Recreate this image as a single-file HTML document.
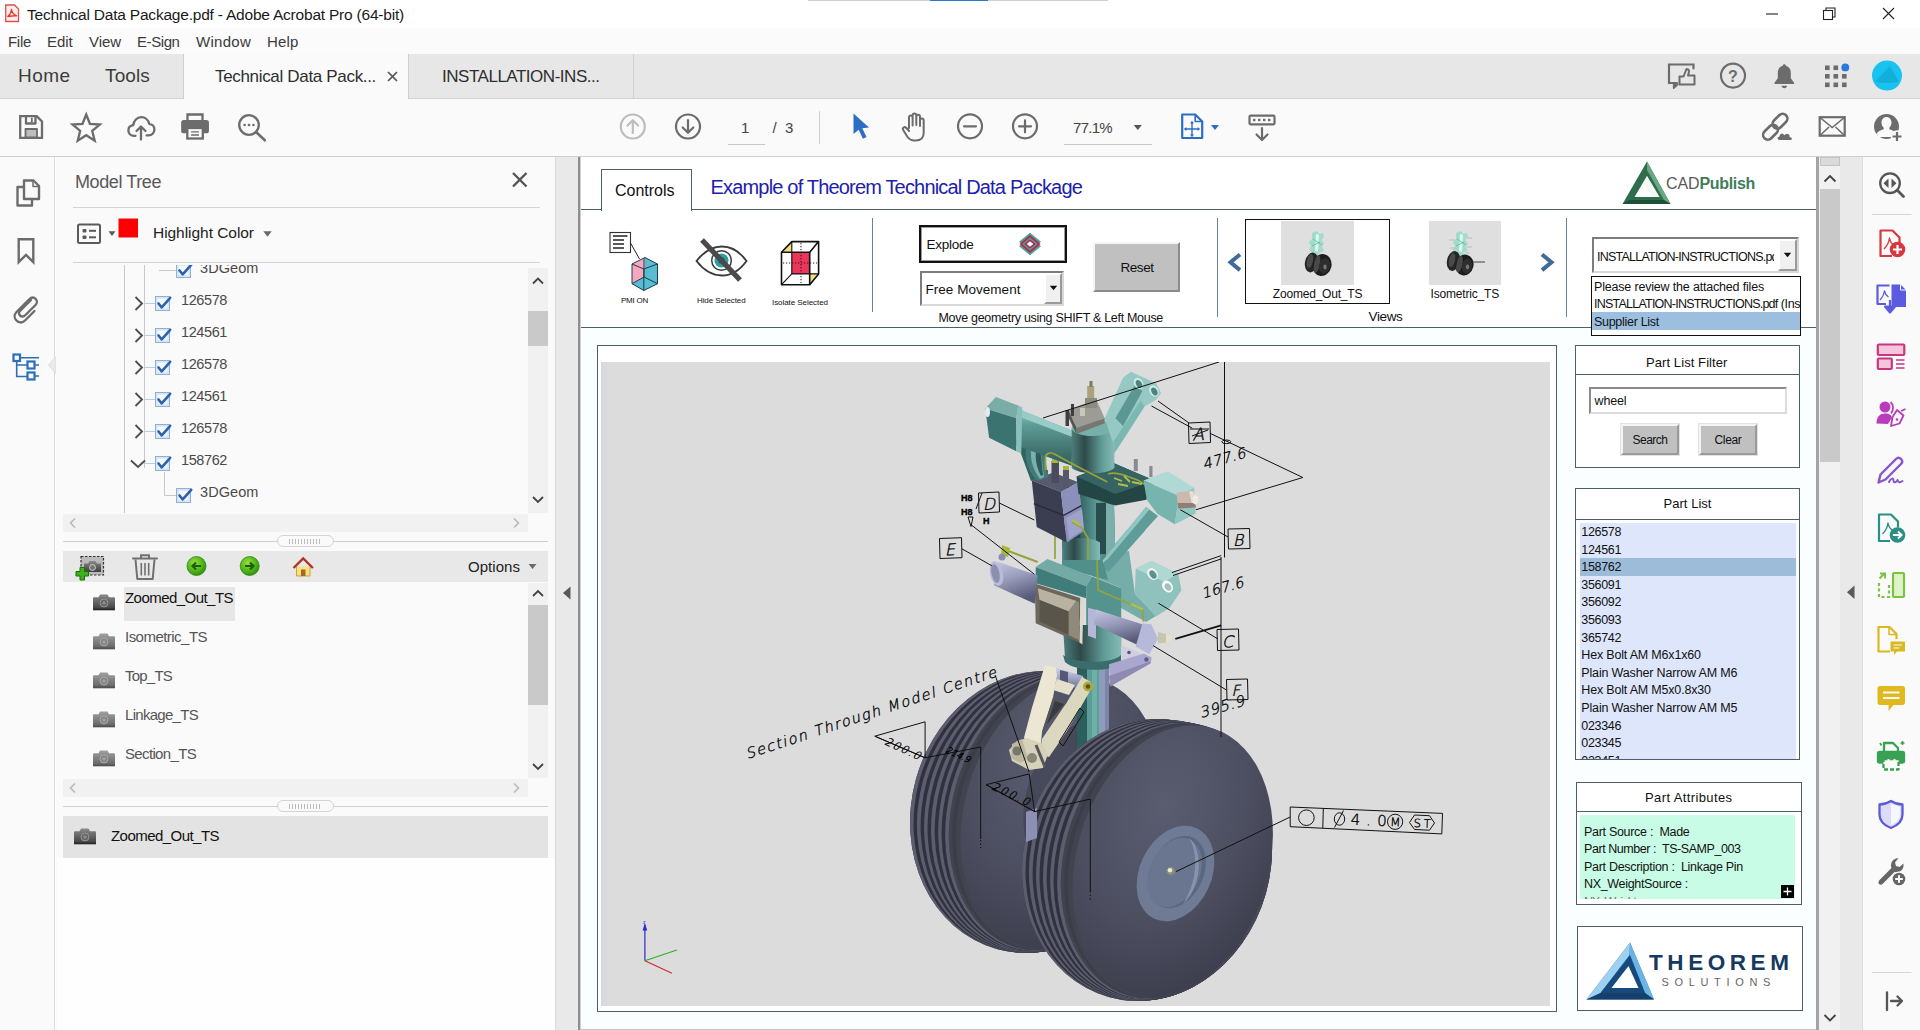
<!DOCTYPE html>
<html lang="en">
<head>
<meta charset="utf-8">
<title>Technical Data Package.pdf - Adobe Acrobat Pro (64-bit)</title>
<style>
*{box-sizing:border-box;margin:0;padding:0}
html,body{width:1920px;height:1030px;overflow:hidden;background:#fff}
body{font-family:"Liberation Sans","DejaVu Sans",sans-serif;color:#222;position:relative}
.abs{position:absolute}
.t{position:absolute;white-space:nowrap;line-height:1}
svg{position:absolute;overflow:visible}
/* ---- chrome ---- */
#titlebar{left:0;top:0;width:1920px;height:28px;background:#fff}
#menubar{left:0;top:28px;width:1920px;height:26px;background:#fbfbfb}
#tabbar{left:0;top:54px;width:1920px;height:45px;background:#e7e7e7;border-bottom:1px solid #d2d2d2}
#toolbar{left:0;top:99px;width:1920px;height:58px;background:#fafafa;border-bottom:1px solid #cfcfcf}
#leftstrip{left:0;top:157px;width:55px;height:873px;background:#fafafa;border-right:1px solid #dcdcdc}
#panel{left:56px;top:157px;width:500px;height:873px;background:#fafafa;border-right:1px solid #d8d8d8}
#gutterL{left:556px;top:157px;width:22px;height:873px;background:#e9e9e9}
#docborderL{left:578px;top:157px;width:3px;height:873px;background:linear-gradient(90deg,#8e8e8e 0,#8e8e8e 66%,#cfcfcf 66%)}
#doc{left:581px;top:157px;width:1235px;height:873px;background:#fff}
#vscroll{left:1816px;top:157px;width:24px;height:873px;background:#f1f1f1;border-left:3px solid #a4a4a4}
#gutterR{left:1840px;top:157px;width:22px;height:873px;background:#e9e9e9}
#rightstrip{left:1862px;top:157px;width:58px;height:873px;background:#fafafa;border-left:1px solid #dcdcdc}
.menu{font-size:15px;color:#3a3a3a;top:34px}
.calib{font-family:"Liberation Sans","DejaVu Sans",sans-serif}
</style>
</head>
<body>
<!-- ================= TITLE BAR ================= -->
<div id="titlebar" class="abs"></div>
<svg style="left:4px;top:4px" width="16" height="19" viewBox="0 0 16 19"><path d="M1.700 1h8.800l4 4v12.500h-12.800z" fill="#fdecec" stroke="#d9534f" stroke-width="1.300"/><path d="M3.800 12.500c2.200-1.800 3.600-4.300 3.800-7 .4 2.800 2.200 5.200 5 6.300-3-.1-6 .2-8.800.7z" fill="none" stroke="#e03a32" stroke-width="1.400" stroke-linejoin="round"/></svg>
<div  class="t" style="letter-spacing:-0.211px;left:27px;top:6.500px;font-size:15.500px;color:#1a1a1a">Technical Data Package.pdf - Adobe Acrobat Pro (64-bit)</div>
<svg style="left:1764px;top:6px" width="140" height="16" viewBox="0 0 140 16"><g stroke="#222" stroke-width="1.1" fill="none"><path d="M2 8h12"/><rect x="59.500" y="4.500" width="9" height="9"/><path d="M62 4.500v-2.500h9v9h-2.500"/><path d="M119 2l11 11M130 2l-11 11"/></g></svg>
<div class="abs" style="left:808px;top:0;width:300px;height:1px;background:#d0d0d0"></div>
<div class="abs" style="left:930px;top:0;width:58px;height:1px;background:#2a7ad0"></div>

<!-- ================= MENU BAR ================= -->
<div id="menubar" class="abs"></div>
<div  class="t menu" style="letter-spacing:-0.293px;left:8px">File</div>
<div  class="t menu" style="letter-spacing:-0.090px;left:47px">Edit</div>
<div  class="t menu" style="letter-spacing:-0.062px;left:89px">View</div>
<div  class="t menu" style="letter-spacing:-0.422px;left:137px">E-Sign</div>
<div  class="t menu" style="letter-spacing:0.273px;left:196px">Window</div>
<div  class="t menu" style="letter-spacing:0.160px;left:267px">Help</div>

<!-- ================= TAB BAR ================= -->
<div id="tabbar" class="abs"></div>
<div  class="t" style="letter-spacing:0.453px;left:18px;top:66px;font-size:19px;color:#3c3c3c">Home</div>
<div  class="t" style="letter-spacing:0.128px;left:105px;top:66px;font-size:19px;color:#3c3c3c">Tools</div>
<div class="abs" style="left:183px;top:54px;width:226px;height:46px;background:#fafafa;border-left:1px solid #d0d0d0;border-right:1px solid #d0d0d0"></div>
<div  class="t" style="letter-spacing:-0.327px;left:215px;top:68px;font-size:17px;color:#2e2e2e">Technical Data Pack...</div>
<svg style="left:387px;top:71px" width="11" height="11" viewBox="0 0 11 11"><path d="M1 1l9 9M10 1l-9 9" stroke="#555" stroke-width="1.700" fill="none"/></svg>
<div class="abs" style="left:633px;top:54px;width:1px;height:44px;background:#d0d0d0"></div>
<div  class="t" style="letter-spacing:-0.478px;left:442px;top:68px;font-size:17px;color:#2e2e2e">INSTALLATION-INS...</div>

<!-- ================= TOOLBAR ================= -->
<div id="toolbar" class="abs"></div>

<svg style="left:0;top:98px" width="1920" height="58" viewBox="0 98 1920 58">
<g fill="none" stroke="#6c6c6c" stroke-width="2.300" stroke-linejoin="round" stroke-linecap="round">
<!-- save -->
<path d="M20.200 116.200h16.500l5.300 5.300v16.300h-21.800z" stroke-linejoin="miter"/>
<path d="M26 116.500v7h9.500v-7"/><path d="M31.800 118.500v3" stroke-width="1.800"/>
<rect x="25.500" y="129" width="11.500" height="8.500" fill="#bdbdbd" stroke-width="1.800"/>
<!-- star -->
<path d="M86.200 114.500l3.700 9.300 10 .7-7.700 6.400 2.500 9.700-8.500-5.400-8.500 5.400 2.500-9.700-7.700-6.400 10-.7z" stroke-linejoin="miter"/>
<!-- cloud up -->
<path d="M135.500 135.800h-1.500c-3.300 0-5.600-2.300-5.600-5.300 0-2.800 2-5 4.800-5.300.6-4.500 3.800-8 8-8 4 0 7.200 2.800 8 6.600 3 .3 5.200 2.600 5.200 5.800 0 3.300-2.600 5.800-5.800 5.800h-2"/>
<path d="M141 139.500v-12.500M136.500 131l4.500-4.500 4.500 4.500"/>
<!-- printer -->
<path d="M187.500 121v-6.500h15v6.500" stroke-linejoin="miter"/>
<rect x="182.300" y="121.200" width="25.500" height="11" rx="1.500" fill="#6c6c6c"/>
<rect x="187.300" y="128" width="15.500" height="10.500" fill="#fafafa" stroke-linejoin="miter"/>
<path d="M191.500 131.800h7M191.500 135h7" stroke-width="1.300"/>
<!-- search -->
<circle cx="249" cy="125" r="9.800"/><path d="M256.300 132.300l8.500 8" stroke-width="2.600"/>
</g>
<g fill="#6c6c6c"><circle cx="244.600" cy="125" r="1.300"/><circle cx="249" cy="125" r="1.300"/><circle cx="253.400" cy="125" r="1.300"/></g>
<!-- page up (disabled) -->
<g fill="none" stroke="#bdbdbd" stroke-width="2.200" stroke-linecap="round" stroke-linejoin="round"><circle cx="632.800" cy="126.500" r="12"/><path d="M632.800 133v-12.500M627.500 125.500l5.300-5.300 5.300 5.300"/></g>
<!-- page down -->
<g fill="none" stroke="#6c6c6c" stroke-width="2.200" stroke-linecap="round" stroke-linejoin="round"><circle cx="688" cy="126.500" r="12"/><path d="M688 120v12.500M682.700 127.500l5.300 5.300 5.300-5.300"/></g>
<path d="M728 144.500h37" stroke="#c9c9c9" stroke-width="1"/>
<path d="M819.500 111v33" stroke="#d0d0d0" stroke-width="1"/>
<!-- select arrow -->
<path d="M853.500 113.500v20.500l5.200-4.300 4.200 9 3.600-1.700-4.200-8.800 6.700-.6z" fill="#2a6fc4"/>
<!-- hand -->
<g fill="none" stroke="#6c6c6c" stroke-width="2" stroke-linecap="round" stroke-linejoin="round">
<path d="M909 128v-10.500c0-2.600 3.600-2.600 3.600 0v8M912.600 125v-9.500c0-2.600 3.700-2.600 3.700 0v9.500M916.300 125v-8.200c0-2.600 3.700-2.600 3.700 0v9M920 126v-5.500c0-2.600 3.700-2.600 3.700 0v12c0 5-3 8-8 8h-1.500c-3.500 0-5.200-1.500-7-4l-4-6.500c-1.200-2 1.300-3.800 2.900-2.200l3 3.200"/>
</g>
<!-- zoom out / in -->
<g fill="none" stroke="#6c6c6c" stroke-width="2.200" stroke-linecap="round"><circle cx="970" cy="126.300" r="12"/><path d="M964 126.300h12"/><circle cx="1025" cy="126.300" r="12"/><path d="M1019 126.300h12M1025 120.300v12"/></g>
<path d="M1064 144.500h88" stroke="#c9c9c9" stroke-width="1"/>
<path d="M1133.800 125h8l-4 5z" fill="#555"/>
<!-- fit page -->
<g fill="none" stroke="#2a6fc4" stroke-width="2.200" stroke-linejoin="round"><path d="M1182.200 114.500h13l7 7v16.500h-20z"/><path d="M1195.200 114.500v7h7" stroke-width="1.600"/></g>
<g stroke="#2a6fc4" stroke-width="1.400" fill="#2a6fc4"><path d="M1192 122.500v13M1185.500 129h13" fill="none"/><path d="M1192 120.800l2 2.600h-4zM1192 137.200l2-2.600h-4zM1183.800 129l2.600-2v4zM1200.200 129l-2.600-2v4z" stroke="none"/></g>
<path d="M1211 125h8l-4 5z" fill="#2a6fc4"/>
<!-- scroll mode -->
<g fill="none" stroke="#6c6c6c" stroke-width="2.200" stroke-linejoin="round" stroke-linecap="round"><rect x="1249.500" y="115.700" width="25" height="8.600" rx="1"/><path d="M1262 128v11.500M1256.500 134.500l5.500 5.500 5.500-5.500"/></g>
<g fill="#6c6c6c"><rect x="1253" y="118.800" width="2.400" height="2.400"/><rect x="1258" y="118.800" width="2.400" height="2.400"/><rect x="1263" y="118.800" width="2.400" height="2.400"/><rect x="1268" y="118.800" width="2.400" height="2.400"/></g>
<!-- link cloud -->
<g fill="none" stroke="#6c6c6c" stroke-width="2.600" stroke-linecap="round" stroke-linejoin="round">
<rect x="1771.500" y="116.500" width="17" height="9.500" rx="4.750" transform="rotate(-45 1780 121.250)"/>
<rect x="1762" y="127.500" width="17" height="9.500" rx="4.750" transform="rotate(-45 1770.500 132.250)"/>
</g>
<path d="M1779.500 140.500c-3 0-3.600-3.800-.6-4.400.3-3.200 3.800-4.100 5.500-1.700 2.300-2.500 6.200-.7 5.900 2.300 3 .3 2.900 3.800.2 3.800z" fill="#6c6c6c" stroke="#fafafa" stroke-width="1.200"/>
<!-- mail -->
<g fill="none" stroke="#6c6c6c" stroke-width="2.200" stroke-linejoin="miter"><rect x="1819.700" y="117.200" width="25" height="18.500"/><path d="M1820 117.500l12.200 10 12.200-10M1820 135.500l9-8.500M1844.500 135.500l-9-8.500" stroke-width="1.600"/></g>
<!-- user plus -->
<circle cx="1886.500" cy="126.500" r="12.500" fill="#6c6c6c"/>
<path d="M1886.500 117c3.200 0 5 2.500 5 5.500 0 2.200-.9 4-2.200 5.200v1.500c3 .8 6.200 2.300 7 4.300l-1.800 3.500h-16l-1.800-3.500c.8-2 4-3.500 7-4.300v-1.500c-1.300-1.200-2.200-3-2.200-5.200 0-3 1.800-5.500 5-5.500z" fill="#fafafa"/>
<circle cx="1897" cy="136.500" r="6.300" fill="#fafafa"/>
<path d="M1897 132v9M1892.500 136.500h9" stroke="#6c6c6c" stroke-width="2.200" fill="none"/>
</svg>
<div class="t" style="left:741px;top:120px;font-size:15px;color:#444">1</div>
<div class="t" style="left:772.500px;top:120px;font-size:15px;color:#444">/&nbsp; 3</div>
<div  class="t" style="letter-spacing:-0.709px;left:1073px;top:120px;font-size:15px;color:#444">77.1%</div>
<!-- tabbar right icons -->
<svg style="left:1640px;top:54px" width="280" height="44" viewBox="1640 54 280 44">
<g fill="none" stroke="#6c6c6c" stroke-width="2.200" stroke-linejoin="round" stroke-linecap="round">
<path d="M1677 83h-8v-18.500h24.500v4" stroke-linejoin="miter"/><path d="M1673.500 83.500v5l4.500-4" fill="#6c6c6c" stroke-width="1.200"/>
<path d="M1679.500 76.500h4l3-7.500c2.500 0 2.800 2 2.200 4l-.7 2.500h6.500v9h-15z" fill="#e7e7e7" stroke-width="2"/>
<circle cx="1733" cy="75.600" r="12"/>
</g>
<text x="1733" y="81.500" font-family="Liberation Sans, sans-serif" font-weight="bold" font-size="16" text-anchor="middle" fill="#6c6c6c">?</text>
<path d="M1784.300 64.300c.9 0 1.500.6 1.500 1.500 3.300.7 5 3.500 5 7v5.500l3.300 4.500v1.300h-19.600v-1.300l3.300-4.500v-5.500c0-3.500 1.700-6.300 5-7 0-.9.600-1.500 1.500-1.500z" fill="#6c6c6c"/><path d="M1781.500 85.800h5.600c0 3.300-5.600 3.300-5.600 0z" fill="#6c6c6c"/>
<g fill="#6c6c6c"><rect x="1825" y="65.500" width="4.600" height="4.600"/><rect x="1833.500" y="65.500" width="4.600" height="4.600"/><rect x="1825" y="74" width="4.600" height="4.600"/><rect x="1833.500" y="74" width="4.600" height="4.600"/><rect x="1842" y="74" width="4.600" height="4.600"/><rect x="1825" y="82.500" width="4.600" height="4.600"/><rect x="1833.500" y="82.500" width="4.600" height="4.600"/><rect x="1842" y="82.500" width="4.600" height="4.600"/></g>
<circle cx="1845.300" cy="67.400" r="5.200" fill="#e7e7e7"/><circle cx="1845.300" cy="67.400" r="3.900" fill="#2a78e0"/>
<circle cx="1887" cy="75.600" r="15" fill="#19c3f0"/><path d="M1890 66l9 15.500c-6 2-18 2-24 0z" fill="#12a8d4" opacity=".75"/>
</g>
</svg>


<!-- ================= LEFT STRIP ================= -->
<div id="leftstrip" class="abs"></div>

<svg style="left:0;top:156px" width="56" height="300" viewBox="0 156 56 300">
<g fill="none" stroke="#6c6c6c" stroke-width="2.400" stroke-linejoin="round">
<path d="M24 180.500h9.500l5.500 5.500v13h-15z" fill="#fafafa"/><path d="M33 180.500v6h6" stroke-width="1.500"/>
<path d="M23.500 187h-6v18.500h14.500v-6"/>
<path d="M18.700 239.200h14.600v23l-7.300-7.300-7.300 7.300z" stroke-linejoin="miter"/>
<path transform="translate(-3.500 2)" d="M34.500 298l-11 11c-2.300 2.300-.2 5.500 2.500 5.500 1.200 0 2-.5 3-1.500l10-10c4-4-1.500-10.500-6.500-5.500l-12.500 12.500c-5.500 5.500 2.500 14.500 8.500 8.500l9.500-9.500" stroke-width="2.300" stroke-linecap="round"/>
</g>
<g fill="none" stroke="#2a6fb8" stroke-width="2.200"><rect x="13.500" y="354.500" width="6.500" height="6.500"/><rect x="27.500" y="361.500" width="7" height="7"/><rect x="27.500" y="372.500" width="7" height="7"/><path d="M16.700 361v15.500h10.800M16.700 365h10.800M34.500 365h4.500M34.500 376h4.500M20 357.700h19" stroke-width="1.600"/></g>
<path d="M56 356.500l-7.500 8.500 7.500 8.500z" fill="#e9e9e9" stroke="#dcdcdc" stroke-width="1"/>
</svg>


<!-- ================= MODEL TREE PANEL ================= -->
<div id="panel" class="abs"></div>
<div  class="t" style="letter-spacing:-0.405px;left:75px;top:173px;font-size:18px;color:#585858">Model Tree</div>
<svg style="left:511px;top:171px" width="18" height="18" viewBox="0 0 18 18"><path d="M2 2l13.500 13.500M15.500 2l-13.500 13.500" stroke="#555" stroke-width="2.400" fill="none"/></svg>
<div class="abs" style="left:73px;top:207px;width:467px;height:1px;background:#d4d4d4"></div>
<svg style="left:76px;top:216px" width="200" height="32" viewBox="76 216 200 32"><rect x="78" y="224.500" width="22" height="18.500" rx="1.500" fill="none" stroke="#5a5a5a" stroke-width="2"/><g fill="#5a5a5a"><rect x="82.500" y="229" width="4" height="3.500" rx="1"/><rect x="82.500" y="235.500" width="4" height="3.500" rx="1"/><rect x="89" y="229.800" width="7" height="2"/><rect x="89" y="236.300" width="7" height="2"/><path d="M108.500 231.300h7l-3.500 4.700z"/><path d="M263.300 231.300h8.400l-4.200 5.500z" fill="#6a6a6a"/></g><rect x="118.500" y="218.500" width="19.500" height="19" fill="#fe0000"/></svg>
<div  class="t" style="letter-spacing:-0.045px;left:153px;top:225px;font-size:15.500px;color:#222">Highlight Color</div>
<div class="abs" style="left:73px;top:262px;width:467px;height:1px;background:#d4d4d4"></div>
<div class="abs" style="left:63px;top:265px;width:465px;height:248px;overflow:hidden"><div class="abs" style="left:0;top:-2px;width:465px;height:250px">
<div class="abs" style="left:61px;top:0;width:1px;height:250px;background:#c8c8c8"></div>
<div class="abs" style="left:81px;top:0;width:1px;height:205px;background:#c8c8c8"></div>
<div class="abs" style="left:96px;top:7px;width:17px;height:1px;background:#c8c8c8"></div>
<svg style="left:113px;top:-1px" width="18" height="17" viewBox="0 0 18 17"><rect x=".5" y="1.500" width="14" height="14" fill="#e4eef9" stroke="#8fb0d8"/><rect x="2" y="3" width="11" height="11" fill="#f4f8fd" stroke="#c5d6ec" stroke-width=".8"/><path d="M3.500 8.500l3.200 3.800 8.500-9.500" fill="none" stroke="#2c62ad" stroke-width="2.600" stroke-linecap="round" stroke-linejoin="round"/></svg>
<div  class="t" style="letter-spacing:0.078px;left:137px;top:-2px;font-size:14.500px;color:#4a4a4a">3DGeom</div>
<div class="abs" style="left:82px;top:40px;width:11px;height:1px;background:#b9cde4"></div>
<svg style="left:71px;top:33px" width="10" height="15" viewBox="0 0 10 15"><path d="M1.500 1l6.500 6.500-6.500 6.500" fill="#fafafa" stroke="#4f4f4f" stroke-width="1.900"/></svg>
<svg style="left:92px;top:32px" width="18" height="17" viewBox="0 0 18 17"><rect x=".5" y="1.500" width="14" height="14" fill="#e4eef9" stroke="#8fb0d8"/><rect x="2" y="3" width="11" height="11" fill="#f4f8fd" stroke="#c5d6ec" stroke-width=".8"/><path d="M3.500 8.500l3.200 3.800 8.500-9.500" fill="none" stroke="#2c62ad" stroke-width="2.600" stroke-linecap="round" stroke-linejoin="round"/></svg>
<div  class="t" style="letter-spacing:-0.398px;left:118px;top:30px;font-size:14.500px;color:#4a4a4a">126578</div>
<div class="abs" style="left:82px;top:72px;width:11px;height:1px;background:#b9cde4"></div>
<svg style="left:71px;top:65px" width="10" height="15" viewBox="0 0 10 15"><path d="M1.500 1l6.500 6.500-6.500 6.500" fill="#fafafa" stroke="#4f4f4f" stroke-width="1.900"/></svg>
<svg style="left:92px;top:64px" width="18" height="17" viewBox="0 0 18 17"><rect x=".5" y="1.500" width="14" height="14" fill="#e4eef9" stroke="#8fb0d8"/><rect x="2" y="3" width="11" height="11" fill="#f4f8fd" stroke="#c5d6ec" stroke-width=".8"/><path d="M3.500 8.500l3.200 3.800 8.500-9.500" fill="none" stroke="#2c62ad" stroke-width="2.600" stroke-linecap="round" stroke-linejoin="round"/></svg>
<div  class="t" style="letter-spacing:-0.398px;left:118px;top:62px;font-size:14.500px;color:#4a4a4a">124561</div>
<div class="abs" style="left:82px;top:104px;width:11px;height:1px;background:#b9cde4"></div>
<svg style="left:71px;top:97px" width="10" height="15" viewBox="0 0 10 15"><path d="M1.500 1l6.500 6.500-6.500 6.500" fill="#fafafa" stroke="#4f4f4f" stroke-width="1.900"/></svg>
<svg style="left:92px;top:96px" width="18" height="17" viewBox="0 0 18 17"><rect x=".5" y="1.500" width="14" height="14" fill="#e4eef9" stroke="#8fb0d8"/><rect x="2" y="3" width="11" height="11" fill="#f4f8fd" stroke="#c5d6ec" stroke-width=".8"/><path d="M3.500 8.500l3.200 3.800 8.500-9.500" fill="none" stroke="#2c62ad" stroke-width="2.600" stroke-linecap="round" stroke-linejoin="round"/></svg>
<div  class="t" style="letter-spacing:-0.398px;left:118px;top:94px;font-size:14.500px;color:#4a4a4a">126578</div>
<div class="abs" style="left:82px;top:136px;width:11px;height:1px;background:#b9cde4"></div>
<svg style="left:71px;top:129px" width="10" height="15" viewBox="0 0 10 15"><path d="M1.500 1l6.500 6.500-6.500 6.500" fill="#fafafa" stroke="#4f4f4f" stroke-width="1.900"/></svg>
<svg style="left:92px;top:128px" width="18" height="17" viewBox="0 0 18 17"><rect x=".5" y="1.500" width="14" height="14" fill="#e4eef9" stroke="#8fb0d8"/><rect x="2" y="3" width="11" height="11" fill="#f4f8fd" stroke="#c5d6ec" stroke-width=".8"/><path d="M3.500 8.500l3.200 3.800 8.500-9.500" fill="none" stroke="#2c62ad" stroke-width="2.600" stroke-linecap="round" stroke-linejoin="round"/></svg>
<div  class="t" style="letter-spacing:-0.398px;left:118px;top:126px;font-size:14.500px;color:#4a4a4a">124561</div>
<div class="abs" style="left:82px;top:168px;width:11px;height:1px;background:#b9cde4"></div>
<svg style="left:71px;top:161px" width="10" height="15" viewBox="0 0 10 15"><path d="M1.500 1l6.500 6.500-6.500 6.500" fill="#fafafa" stroke="#4f4f4f" stroke-width="1.900"/></svg>
<svg style="left:92px;top:160px" width="18" height="17" viewBox="0 0 18 17"><rect x=".5" y="1.500" width="14" height="14" fill="#e4eef9" stroke="#8fb0d8"/><rect x="2" y="3" width="11" height="11" fill="#f4f8fd" stroke="#c5d6ec" stroke-width=".8"/><path d="M3.500 8.500l3.200 3.800 8.500-9.500" fill="none" stroke="#2c62ad" stroke-width="2.600" stroke-linecap="round" stroke-linejoin="round"/></svg>
<div  class="t" style="letter-spacing:-0.398px;left:118px;top:158px;font-size:14.500px;color:#4a4a4a">126578</div>
<div class="abs" style="left:82px;top:200px;width:11px;height:1px;background:#b9cde4"></div>
<svg style="left:67px;top:196px" width="16" height="10" viewBox="0 0 16 10"><path d="M1 1.500l7 6.500 7-6.500" fill="#fafafa" stroke="#4f4f4f" stroke-width="1.900"/></svg>
<svg style="left:92px;top:192px" width="18" height="17" viewBox="0 0 18 17"><rect x=".5" y="1.500" width="14" height="14" fill="#e4eef9" stroke="#8fb0d8"/><rect x="2" y="3" width="11" height="11" fill="#f4f8fd" stroke="#c5d6ec" stroke-width=".8"/><path d="M3.500 8.500l3.200 3.800 8.500-9.500" fill="none" stroke="#2c62ad" stroke-width="2.600" stroke-linecap="round" stroke-linejoin="round"/></svg>
<div  class="t" style="letter-spacing:-0.398px;left:118px;top:190px;font-size:14.500px;color:#4a4a4a">158762</div>
<div class="abs" style="left:101px;top:209px;width:1px;height:24px;background:#c8c8c8"></div>
<div class="abs" style="left:101px;top:232px;width:12px;height:1px;background:#c8c8c8"></div>
<svg style="left:113px;top:224px" width="18" height="17" viewBox="0 0 18 17"><rect x=".5" y="1.500" width="14" height="14" fill="#e4eef9" stroke="#8fb0d8"/><rect x="2" y="3" width="11" height="11" fill="#f4f8fd" stroke="#c5d6ec" stroke-width=".8"/><path d="M3.500 8.500l3.200 3.800 8.500-9.500" fill="none" stroke="#2c62ad" stroke-width="2.600" stroke-linecap="round" stroke-linejoin="round"/></svg>
<div  class="t" style="letter-spacing:0.078px;left:137px;top:222px;font-size:14.500px;color:#4a4a4a">3DGeom</div>
</div></div>
<div class="abs" style="left:528px;top:268px;width:20px;height:245px;background:#f1f1f1"></div>
<div class="abs" style="left:528px;top:311px;width:20px;height:35px;background:#c9c9c9"></div>
<svg style="left:531px;top:274px" width="14" height="240" viewBox="0 0 14 240"><path d="M2 9.500l5-5 5 5M2 223l5 5 5-5" fill="none" stroke="#444" stroke-width="1.800"/></svg>
<div class="abs" style="left:63px;top:514px;width:465px;height:18px;background:#f1f1f1"></div>
<svg style="left:63px;top:514px" width="465" height="18" viewBox="0 0 465 18"><path d="M12 4.500l-4.500 4.500 4.500 4.500M451 4.500l4.500 4.500-4.500 4.500" fill="none" stroke="#b9b9b9" stroke-width="1.600"/></svg>
<div class="abs" style="left:63px;top:541px;width:485px;height:1px;background:#d0d0d0"></div><div class="abs" style="left:277px;top:535px;width:57px;height:12px;border:1.500px solid #d4d4d4;border-radius:6px;background:#fafafa"></div><div class="abs" style="left:289px;top:539px;width:33px;height:5px;background:repeating-linear-gradient(90deg,#bdbdbd 0 1px,transparent 1px 3px)"></div>
<div class="abs" style="left:63px;top:551px;width:485px;height:31px;background:#e8e8e8"></div>
<svg style="left:63px;top:551px" width="485" height="31" viewBox="63 551 485 31">
<defs><radialGradient id="gr" cx=".4" cy=".35" r=".7"><stop offset="0" stop-color="#9be03a"/><stop offset=".6" stop-color="#4fb51a"/><stop offset="1" stop-color="#2c8a0c"/></radialGradient>
<linearGradient id="cam" x1="0" y1="0" x2="0" y2="1"><stop offset="0" stop-color="#8a8a8a"/><stop offset="1" stop-color="#3c3c3c"/></linearGradient></defs>
<rect x="81" y="556.500" width="22.500" height="18.500" fill="#bbb" stroke="#333" stroke-width="1.200" stroke-dasharray="2.500 1.500"/>
<path d="M84 572v-8.500h4l1.500-2.500h6l1.500 2.500h4v8.500z" fill="url(#cam)"/><circle cx="92.500" cy="567.500" r="3" fill="#777" stroke="#ddd" stroke-width=".8"/>
<path d="M80 567.500h4.500v4h4v4.500h-4v4h-4.500v-4h-4v-4.500h4z" fill="#3fb01c" stroke="#1d6e0a" stroke-width="1"/>
<g fill="none" stroke="#707070" stroke-width="2"><path d="M133 558.500h24M141 558v-2.800h8v2.800" stroke-linecap="round"/><path d="M135.500 559.500l1.800 19.500h15.400l1.800-19.500" stroke-linejoin="round"/><path d="M141.300 563v12.500M145 563v12.500M148.700 563v12.500" stroke-width="1.600"/></g>
<circle cx="196.500" cy="566" r="9.500" fill="url(#gr)" stroke="#2f8a10" stroke-width=".8"/><path d="M201 566h-8.500M196 562.500l-3.500 3.500 3.500 3.500" stroke="#1c5f08" stroke-width="2.200" fill="none"/>
<circle cx="249.700" cy="566" r="9.500" fill="url(#gr)" stroke="#2f8a10" stroke-width=".8"/><path d="M245 566h8.500M250 562.500l3.500 3.500-3.500 3.500" stroke="#1c5f08" stroke-width="2.200" fill="none"/>
<path d="M296.500 566.500v9.500h13.500v-9.500" fill="#f6e08a" stroke="#c9a635" stroke-width="1"/><rect x="301" y="569.500" width="4.500" height="6.500" fill="#a86a1e"/><path d="M293.500 568l9.700-9.500 9.700 9.500" fill="none" stroke="#b03326" stroke-width="2.400" stroke-linejoin="miter"/>
<path d="M528.500 564h8l-4 5z" fill="#6a6a6a"/>
</svg>
<div  class="t" style="letter-spacing:0.042px;left:468px;top:559px;font-size:15px;color:#222">Options</div>
<div class="abs" style="left:124px;top:587px;width:111px;height:34px;background:#e6e6e6"></div>
<svg style="left:92px;top:593px;opacity:1" width="24" height="18" viewBox="0 0 24 18"><path d="M1 17v-11.500c0-.8.500-1.200 1.200-1.200h4.300l1.500-2.800h7.500l1.500 2.800h4.800c.7 0 1.200.4 1.200 1.200v11.500z" fill="url(#cam)"/><rect x="1" y="15.500" width="22" height="1.800" fill="#2a2a2a"/><circle cx="12" cy="10" r="4" fill="#666" stroke="#9a9a9a" stroke-width=".9"/><circle cx="12" cy="10" r="1.800" fill="#8a8a8a"/></svg>
<div  class="t" style="letter-spacing:-0.543px;left:125px;top:590px;font-size:15px;color:#111">Zoomed_Out_TS</div>
<svg style="left:92px;top:632px;opacity:0.8" width="24" height="18" viewBox="0 0 24 18"><path d="M1 17v-11.500c0-.8.500-1.200 1.200-1.200h4.300l1.500-2.800h7.500l1.500 2.800h4.800c.7 0 1.200.4 1.200 1.200v11.500z" fill="url(#cam)"/><rect x="1" y="15.500" width="22" height="1.800" fill="#2a2a2a"/><circle cx="12" cy="10" r="4" fill="#666" stroke="#9a9a9a" stroke-width=".9"/><circle cx="12" cy="10" r="1.800" fill="#8a8a8a"/></svg>
<div  class="t" style="letter-spacing:-0.530px;left:125px;top:629px;font-size:15px;color:#555">Isometric_TS</div>
<svg style="left:92px;top:671px;opacity:0.8" width="24" height="18" viewBox="0 0 24 18"><path d="M1 17v-11.500c0-.8.500-1.200 1.200-1.200h4.300l1.500-2.800h7.500l1.500 2.800h4.800c.7 0 1.200.4 1.200 1.200v11.500z" fill="url(#cam)"/><rect x="1" y="15.500" width="22" height="1.800" fill="#2a2a2a"/><circle cx="12" cy="10" r="4" fill="#666" stroke="#9a9a9a" stroke-width=".9"/><circle cx="12" cy="10" r="1.800" fill="#8a8a8a"/></svg>
<div  class="t" style="letter-spacing:-0.784px;left:125px;top:668px;font-size:15px;color:#555">Top_TS</div>
<svg style="left:92px;top:710px;opacity:0.8" width="24" height="18" viewBox="0 0 24 18"><path d="M1 17v-11.500c0-.8.500-1.200 1.200-1.200h4.300l1.500-2.800h7.500l1.500 2.800h4.800c.7 0 1.200.4 1.200 1.200v11.500z" fill="url(#cam)"/><rect x="1" y="15.500" width="22" height="1.800" fill="#2a2a2a"/><circle cx="12" cy="10" r="4" fill="#666" stroke="#9a9a9a" stroke-width=".9"/><circle cx="12" cy="10" r="1.800" fill="#8a8a8a"/></svg>
<div  class="t" style="letter-spacing:-0.706px;left:125px;top:707px;font-size:15px;color:#555">Linkage_TS</div>
<svg style="left:92px;top:749px;opacity:0.8" width="24" height="18" viewBox="0 0 24 18"><path d="M1 17v-11.500c0-.8.500-1.200 1.200-1.200h4.300l1.500-2.800h7.500l1.500 2.800h4.800c.7 0 1.200.4 1.200 1.200v11.500z" fill="url(#cam)"/><rect x="1" y="15.500" width="22" height="1.800" fill="#2a2a2a"/><circle cx="12" cy="10" r="4" fill="#666" stroke="#9a9a9a" stroke-width=".9"/><circle cx="12" cy="10" r="1.800" fill="#8a8a8a"/></svg>
<div  class="t" style="letter-spacing:-0.655px;left:125px;top:746px;font-size:15px;color:#555">Section_TS</div>
<div class="abs" style="left:528px;top:583px;width:20px;height:195px;background:#f1f1f1"></div>
<div class="abs" style="left:528px;top:605px;width:20px;height:100px;background:#c9c9c9"></div>
<svg style="left:531px;top:583px" width="14" height="195" viewBox="0 0 14 195"><path d="M2 13l5-5 5 5M2 181l5 5 5-5" fill="none" stroke="#444" stroke-width="1.800"/></svg>
<div class="abs" style="left:63px;top:779px;width:465px;height:18px;background:#f1f1f1"></div>
<svg style="left:63px;top:779px" width="465" height="18" viewBox="0 0 465 18"><path d="M12 4.500l-4.500 4.500 4.500 4.500M451 4.500l4.500 4.500-4.500 4.500" fill="none" stroke="#b9b9b9" stroke-width="1.600"/></svg>
<div class="abs" style="left:63px;top:806px;width:485px;height:1px;background:#d0d0d0"></div><div class="abs" style="left:277px;top:800px;width:57px;height:12px;border:1.500px solid #d4d4d4;border-radius:6px;background:#fafafa"></div><div class="abs" style="left:289px;top:804px;width:33px;height:5px;background:repeating-linear-gradient(90deg,#bdbdbd 0 1px,transparent 1px 3px)"></div>
<div class="abs" style="left:63px;top:816px;width:485px;height:42px;background:#e3e3e3"></div>
<svg style="left:73px;top:827px;opacity:1" width="24" height="18" viewBox="0 0 24 18"><path d="M1 17v-11.500c0-.8.500-1.200 1.200-1.200h4.300l1.500-2.800h7.500l1.500 2.800h4.800c.7 0 1.200.4 1.200 1.200v11.500z" fill="url(#cam)"/><rect x="1" y="15.500" width="22" height="1.800" fill="#2a2a2a"/><circle cx="12" cy="10" r="4" fill="#666" stroke="#9a9a9a" stroke-width=".9"/><circle cx="12" cy="10" r="1.800" fill="#8a8a8a"/></svg>
<div  class="t" style="letter-spacing:-0.543px;left:111px;top:828px;font-size:15px;color:#111">Zoomed_Out_TS</div>
<div class="abs" style="left:57px;top:858px;width:498px;height:172px;background:#fefefe"></div>

<div id="gutterL" class="abs"></div>
<div id="docborderL" class="abs"></div>

<!-- ================= DOCUMENT ================= -->
<div id="doc" class="abs"></div>
<!-- pale tinted page area below controls -->
<div class="abs" style="left:581px;top:328px;width:1235px;height:702px;background:#fafeff"></div>
<!-- header: Controls tab + title -->
<div class="abs" style="left:581px;top:209px;width:1235px;height:1px;background:#4d6068"></div>
<div class="abs" style="left:601px;top:169px;width:91px;height:42px;background:#fff;border:1px solid #4d6068;border-bottom:none"></div>
<div  class="t" style="letter-spacing:-0.010px;left:615px;top:183px;font-size:16px;color:#111">Controls</div>
<div  class="t" style="letter-spacing:-0.818px;left:710.500px;top:176.500px;font-size:20px;color:#2020ac">Example of Theorem Technical Data Package</div>
<!-- CADPublish logo -->
<svg style="left:1620px;top:158px" width="140" height="50" viewBox="1620 158 140 50">
<path d="M1647 161.500l23.500 42.500h-48z" fill="#2f6e4c"/>
<path d="M1647 161.500l23.500 42.500-6.500-4-17-30z" fill="#6aa784"/>
<path d="M1622.500 204l6.500-4h35l6.500 4z" fill="#1e5236"/>
<path d="M1647 176l12.500 21h-25z" fill="#fff"/>
<path d="M1647 176l-4 6.500 9 14.500h7.500z" fill="#e8f1ec" opacity=".5"/>
</svg>
<div  class="t" style="letter-spacing:-0.160px;left:1666px;top:175.500px;font-size:16px;color:#5a5a5a">CAD</div>
<div  class="t" style="letter-spacing:-0.326px;left:1699.500px;top:175.500px;font-size:16px;color:#3f7d5c;font-weight:bold">Publish</div>

<!-- controls row bottom line -->
<div class="abs" style="left:581px;top:327px;width:1235px;height:1px;background:#4d6068"></div>
<!-- separators -->
<div class="abs" style="left:872px;top:218px;width:1px;height:94px;background:#6a8494"></div>
<div class="abs" style="left:1217px;top:218px;width:1px;height:99px;background:#6a8494"></div>
<div class="abs" style="left:1566px;top:218px;width:1px;height:99px;background:#6a8494"></div>

<!-- PMI ON icon -->
<svg style="left:605px;top:228px" width="240" height="84" viewBox="605 228 240 84">
<rect x="610" y="232.500" width="20.500" height="20" fill="#fff" stroke="#333" stroke-width="1.100"/>
<path d="M613 236h14.500M613 240h11M613 244h11M613 248h11" stroke="#222" stroke-width="1.300"/>
<path d="M630.500 243l9 16" stroke="#222" stroke-width="1"/>
<path d="M645 257.500l12.500 6.500-13.700 5-11.800-5z" fill="#f6a6bd"/>
<path d="M632 264l11.800 5v21.500l-11.800-6.800z" fill="#f6a6bd"/>
<path d="M645 257.500l12.500 6.500v19.700l-13.700 6.800v-21.500l1.200-.4z" fill="#59bdd2"/>
<path d="M632 283.700l12-6.700 13.500 6.700-13.700 6.800z" fill="#59bdd2"/>
<path d="M645 257.500l12.500 6.500v19.700l-13.700 6.800-11.800-6.800v-19.700zM632 264l11.800 5 13.700-5M643.800 269v21.500M632 283.700l12-6.700 13.500 6.700M644 277v-19" fill="none" stroke="#1c3c50" stroke-width="1"/>
<!-- Hide selected eye -->
<path d="M696.500 261c7-9 16-14.500 25.500-14.500s18 5.500 24.500 14.500c-6.500 9-15 14.500-24.500 14.500s-18.500-5.500-25.500-14.500z" fill="#fff" stroke="#3a3a3a" stroke-width="1.800"/>
<circle cx="721.500" cy="260.500" r="9.800" fill="#fff" stroke="#3a3a3a" stroke-width="1.500"/>
<circle cx="721.500" cy="260.500" r="7" fill="#2b9fa7"/><circle cx="721.500" cy="260.500" r="3.200" fill="#1d5560"/>
<path d="M702 240l38 40" stroke="#4a4a4a" stroke-width="5.200" stroke-linecap="butt"/>
<!-- Isolate cube -->
<path d="M781.500 252.500l10.500-10.800v10.800z" fill="#f3e07c"/><path d="M809.500 284.500l9-10.800h-9z" fill="#f3e07c"/>
<rect x="791.700" y="252.300" width="18" height="21.700" fill="#eb3559"/>
<g fill="none" stroke="#111" stroke-width="1.600" stroke-linejoin="round"><rect x="781.500" y="252.300" width="28.200" height="32.400"/><path d="M781.500 252.300l10.300-10.700h26.800v32.300l-8.900 10.800M809.700 252.300l8.900-10.700"/><path d="M791.800 241.600v32.300h26.800M791.800 273.900l-10.300 10.800" stroke-width="1.100"/></g>
<path d="M801 243v40M783 263h34" stroke="#222" stroke-width="1.100" stroke-dasharray="1.200 1.800" fill="none"/>
</svg>
<div  class="t" style="letter-spacing:-0.242px;left:621px;top:296.500px;font-size:8px;color:#111">PMI ON</div>
<div  class="t" style="letter-spacing:-0.101px;left:697px;top:297px;font-size:8px;color:#111">Hide Selected</div>
<div  class="t" style="letter-spacing:-0.059px;left:772px;top:298.500px;font-size:8px;color:#111">Isolate Selected</div>

<!-- Explode -->
<div class="abs" style="left:919px;top:225px;width:148px;height:38px;background:#fff;border:2px solid #111;box-shadow:inset 0 0 0 1px #9a9a9a"></div>
<div  class="t" style="letter-spacing:-0.257px;left:926.500px;top:237.500px;font-size:13.500px;color:#111">Explode</div>
<svg style="left:1018px;top:232px" width="24" height="24" viewBox="0 0 24 24"><path d="M12 .8l11 9-11 9-11-9z" fill="#4f9f97"/><path d="M12 5.200l11 9-11 9-11-9z" fill="#4f9f97"/><path d="M12 3l10.500 9-10.500 9-10.500-9z" fill="#b8254c"/><path d="M12 5.300l7.800 6.700-7.800 6.700-7.800-6.700z" fill="#4f9f97"/><path d="M12 7.300l5.600 4.700-5.600 4.700-5.600-4.700z" fill="#b8254c"/><path d="M12 9.300l3.300 2.700-3.300 2.700-3.300-2.700z" fill="#fff"/></svg>
<!-- Free movement -->
<div class="abs" style="left:920px;top:271px;width:144px;height:35px;background:#fff;border:2px solid;border-color:#7c7c7c #d8d8d8 #d8d8d8 #7c7c7c"></div>
<div  class="t" style="letter-spacing:0.035px;left:925.500px;top:282.500px;font-size:13.500px;color:#111">Free Movement</div>
<div class="abs" style="left:1044px;top:273px;width:18px;height:31px;background:#f0f0f0;border:2px solid;border-color:#fff #9a9a9a #9a9a9a #fff"></div>
<svg style="left:1049px;top:285px" width="9" height="6" viewBox="0 0 9 6"><path d="M.8.800h7.400l-3.700 4.400z" fill="#111"/></svg>
<!-- Reset -->
<div class="abs" style="left:1093px;top:242px;width:87px;height:50px;background:#c0c0c0;border:2px solid;border-color:#f4f4f4 #8a8a8a #8a8a8a #f4f4f4"></div>
<div  class="t" style="letter-spacing:-0.456px;left:1120.500px;top:261px;font-size:13.500px;color:#111">Reset</div>
<div  class="t" style="letter-spacing:-0.302px;left:938.500px;top:311.500px;font-size:12.500px;color:#111">Move geometry using SHIFT &amp; Left Mouse</div>

<!-- Views -->
<svg style="left:1226px;top:250px" width="332" height="26" viewBox="1226 250 332 26"><path d="M1240 254.500l-9.500 7.800 9.500 7.800" fill="none" stroke="#3f6a99" stroke-width="4"/><path d="M1542 254.500l9.500 7.800-9.500 7.800" fill="none" stroke="#3f6a99" stroke-width="4"/></svg>
<div class="abs" style="left:1245px;top:219px;width:145px;height:85px;background:#fff;border:1.500px solid #111"></div>
<div class="abs" style="left:1281px;top:221px;width:73px;height:64px;background:#dfdfdf"></div>
<div class="abs" style="left:1429px;top:221px;width:72px;height:64px;background:#dfdfdf"></div>
<svg style="left:1281px;top:221px" width="73" height="64" viewBox="0 0 73 64">
<path d="M31 12l5-2 2 3 4-1 1 4-3 3 3 3-2 4 2 4-5 2-2 4h-4l-1-5-3-2 2-4-2-4 3-3z" fill="#9fdcca"/><path d="M35 13l3 1-1 17-3-1z" fill="#e4f6ef"/><path d="M32 18l9 6M31 25l8-4" stroke="#6cbfa8" stroke-width="1"/>
<ellipse cx="30.500" cy="41.500" rx="6.500" ry="10" transform="rotate(12 30.500 41.500)" fill="#262626"/><ellipse cx="29" cy="40" rx="3" ry="7" transform="rotate(12 29 40)" fill="#4a4a4a"/>
<ellipse cx="41" cy="44" rx="9.500" ry="11" transform="rotate(12 41 44)" fill="#1c1c1c"/><ellipse cx="36" cy="43" rx="3" ry="9" transform="rotate(12 36 43)" fill="#484848"/><ellipse cx="43.500" cy="45" rx="5.500" ry="8" transform="rotate(12 43.500 45)" fill="#2e2e2e"/><ellipse cx="44" cy="46" rx="1.600" ry="2.400" fill="#777"/>
</svg>
<svg style="left:1429px;top:221px" width="72" height="64" viewBox="0 0 72 64">
<path d="M27 12l5-2 2 3 4-1 1 4-3 3 3 3-2 4 2 4-5 2-2 4h-4l-1-5-3-2 2-4-2-4 3-3z" fill="#9fdcca"/><path d="M31 13l3 1-1 17-3-1z" fill="#e4f6ef"/><path d="M28 18l9 6M27 25l8-4" stroke="#6cbfa8" stroke-width="1"/>
<path d="M20 19h6M38 17h5M21 27h5M38 26h5M37 32h4" stroke="#b0b0b0" stroke-width=".7"/>
<ellipse cx="24.500" cy="40" rx="6.500" ry="10" transform="rotate(12 24.500 40)" fill="#262626"/><ellipse cx="23" cy="39" rx="3" ry="7" transform="rotate(12 23 39)" fill="#4a4a4a"/>
<ellipse cx="35.500" cy="44" rx="9" ry="10.500" transform="rotate(12 35.500 44)" fill="#1c1c1c"/><ellipse cx="30.500" cy="43" rx="3" ry="8.500" transform="rotate(12 30.500 43)" fill="#484848"/><ellipse cx="38" cy="45" rx="5" ry="7.500" transform="rotate(12 38 45)" fill="#2e2e2e"/><ellipse cx="38.500" cy="46" rx="1.600" ry="2.400" fill="#777"/>
<path d="M44 41h12" stroke="#666" stroke-width="1.300"/>
</svg>
<div  class="t" style="letter-spacing:-0.196px;left:1272.800px;top:288px;font-size:12px;color:#111">Zoomed_Out_TS</div>
<div  class="t" style="letter-spacing:-0.182px;left:1430.500px;top:288px;font-size:12px;color:#111">Isometric_TS</div>
<div  class="t" style="letter-spacing:-0.356px;left:1368.500px;top:310px;font-size:13.500px;color:#111">Views</div>

<!-- attachments dropdown -->
<div class="abs" style="left:1592px;top:237px;width:207px;height:36px;background:#fff;border:2px solid;border-color:#7c7c7c #d8d8d8 #d8d8d8 #7c7c7c"></div>
<div class="abs" style="left:1597px;top:246px;width:177px;height:22px;overflow:hidden"><div  class="t" style="letter-spacing:-0.770px;left:0;top:5px;font-size:12.500px;color:#111">INSTALLATION-INSTRUCTIONS.pdf</div></div>
<div class="abs" style="left:1778px;top:239px;width:19px;height:32px;background:#f0f0f0;border:2px solid;border-color:#fff #9a9a9a #9a9a9a #fff"></div>
<svg style="left:1783px;top:252px" width="9" height="6" viewBox="0 0 9 6"><path d="M.8.800h7.400l-3.700 4.400z" fill="#111"/></svg>
<div class="abs" style="left:1591px;top:276px;width:210px;height:60px;background:#fff;border:1.500px solid #111;overflow:hidden">
 <div class="abs" style="left:0;top:35px;width:210px;height:18px;background:#9dbfdf"></div>
 <div  class="t" style="letter-spacing:-0.181px;left:2px;top:4px;font-size:12.500px;color:#111">Please review the attached files</div>
 <div class="t" style="left:2px;top:21px;font-size:12.500px;color:#111"><span style="letter-spacing:-0.770px">INSTALLATION-INSTRUCTIONS.pdf</span><span style="letter-spacing:-.3px"> (Instructions)</span></div>
 <div  class="t" style="letter-spacing:-0.292px;left:2px;top:38.500px;font-size:12.500px;color:#111">Supplier List</div>
</div>

<!-- Part List Filter -->
<div class="abs" style="left:1575px;top:345px;width:225px;height:123px;background:#fff;border:1px solid #4d6068"></div>
<div class="abs" style="left:1575px;top:374px;width:225px;height:1px;background:#4d6068"></div>
<div  class="t" style="letter-spacing:0.082px;left:1646px;top:355.500px;font-size:13px;color:#111">Part List Filter</div>
<div class="abs" style="left:1589px;top:387px;width:198px;height:27px;background:#fff;border:2px solid;border-color:#8a8a8a #dcdcdc #dcdcdc #8a8a8a"></div>
<div  class="t" style="letter-spacing:-0.134px;left:1594.500px;top:395px;font-size:12.500px;color:#111">wheel</div>
<div class="abs" style="left:1621px;top:424px;width:58px;height:31px;background:#c0c0c0;border:2px solid;border-color:#f4f4f4 #9a9a9a #9a9a9a #f4f4f4;outline:1px solid #e2e2e2"></div>
<div class="abs" style="left:1699px;top:424px;width:58px;height:31px;background:#c0c0c0;border:2px solid;border-color:#f4f4f4 #9a9a9a #9a9a9a #f4f4f4;outline:1px solid #e2e2e2"></div>
<div  class="t" style="letter-spacing:-0.505px;left:1632.500px;top:434px;font-size:12px;color:#111">Search</div>
<div  class="t" style="letter-spacing:-0.338px;left:1714.500px;top:434px;font-size:12px;color:#111">Clear</div>

<!-- Part List -->
<div class="abs" style="left:1575px;top:488px;width:225px;height:272px;background:#fff;border:1px solid #4d6068;overflow:hidden">
 <div class="abs" style="left:0;top:30px;width:225px;height:1px;background:#4d6068"></div>
 <div class="abs" style="left:4px;top:34px;width:216px;height:240px;background:#dde6fb"></div>
 <div class="abs" style="left:4px;top:69px;width:216px;height:18px;background:#9dbcd9"></div>
</div>
<div  class="t" style="letter-spacing:0.035px;left:1663.500px;top:496.500px;font-size:13px;color:#111">Part List</div>
<div class="abs" style="left:1576px;top:520px;width:222px;height:239px;overflow:hidden">
<div  class="t" style="letter-spacing:-0.336px;left:5.300px;top:6px;font-size:12.500px;color:#111">126578</div>
<div  class="t" style="letter-spacing:-0.336px;left:5.300px;top:23.600px;font-size:12.500px;color:#111">124561</div>
<div  class="t" style="letter-spacing:-0.336px;left:5.300px;top:41.200px;font-size:12.500px;color:#111">158762</div>
<div  class="t" style="letter-spacing:-0.336px;left:5.300px;top:58.800px;font-size:12.500px;color:#111">356091</div>
<div  class="t" style="letter-spacing:-0.336px;left:5.300px;top:76.400px;font-size:12.500px;color:#111">356092</div>
<div  class="t" style="letter-spacing:-0.336px;left:5.300px;top:94px;font-size:12.500px;color:#111">356093</div>
<div  class="t" style="letter-spacing:-0.336px;left:5.300px;top:111.600px;font-size:12.500px;color:#111">365742</div>
<div  class="t" style="letter-spacing:-0.183px;left:5.300px;top:129.200px;font-size:12.500px;color:#111">Hex Bolt AM M6x1x60</div>
<div  class="t" style="letter-spacing:-0.160px;left:5.300px;top:146.800px;font-size:12.500px;color:#111">Plain Washer Narrow AM M6</div>
<div  class="t" style="letter-spacing:-0.186px;left:5.300px;top:164.400px;font-size:12.500px;color:#111">Hex Bolt AM M5x0.8x30</div>
<div  class="t" style="letter-spacing:-0.160px;left:5.300px;top:182px;font-size:12.500px;color:#111">Plain Washer Narrow AM M5</div>
<div  class="t" style="letter-spacing:-0.336px;left:5.300px;top:199.600px;font-size:12.500px;color:#111">023346</div>
<div  class="t" style="letter-spacing:-0.336px;left:5.300px;top:217.200px;font-size:12.500px;color:#111">023345</div>
<div  class="t" style="letter-spacing:-0.336px;left:5.300px;top:234.800px;font-size:12.500px;color:#111">023451</div>
</div>

<!-- Part Attributes -->
<div class="abs" style="left:1576px;top:782px;width:226px;height:123px;background:#fff;border:1px solid #4d6068"></div>
<div class="abs" style="left:1576px;top:811px;width:226px;height:1px;background:#4d6068"></div>
<div  class="t" style="letter-spacing:0.390px;left:1645px;top:790.500px;font-size:13px;color:#111">Part Attributes</div>
<div class="abs" style="left:1580px;top:815px;width:215px;height:84px;background:#c9fce6;overflow:hidden">
<div  class="t" style="letter-spacing:-0.299px;left:4px;top:10.500px;font-size:12.500px;color:#111">Part Source :&nbsp; Made</div>
<div  class="t" style="letter-spacing:-0.438px;left:4px;top:28px;font-size:12.500px;color:#111">Part Number :&nbsp; TS-SAMP_003</div>
<div  class="t" style="letter-spacing:-0.295px;left:4px;top:45.800px;font-size:12.500px;color:#111">Part Description :&nbsp; Linkage Pin</div>
<div  class="t" style="letter-spacing:-0.326px;left:4px;top:63.400px;font-size:12.500px;color:#111">NX_WeightSource :</div>
<div  class="t" style="letter-spacing:-1.268px;left:4px;top:81px;font-size:12.500px;color:#777">NX_Weight :</div>
</div>
<div class="abs" style="left:1781px;top:885px;width:13px;height:13px;background:#000"></div>
<svg style="left:1781px;top:885px" width="13" height="13" viewBox="0 0 13 13"><path d="M6.500 2.500v8M2.500 6.500h8" stroke="#fff" stroke-width="1.300"/></svg>

<!-- Theorem logo -->
<div class="abs" style="left:1577px;top:926px;width:226px;height:85px;background:#fff;border:1px solid #4d6068"></div>
<svg style="left:1584px;top:940px" width="72" height="62" viewBox="1584 940 72 62">
<path d="M1630 942.500l24 57h-67.500z" fill="#1f6fb5"/>
<path d="M1630 942.500l-43.500 57 14-6.500 29-38z" fill="#9fd0f2"/>
<path d="M1630 942.500l24 57-9-6.500-15-38z" fill="#6bb4e6"/>
<path d="M1586.500 999.500l14-6.500h44.500l9 6.500z" fill="#163f6b"/>
<path d="M1630 955.500l15 37.500h-44.500z" fill="#174a7c"/>
<path d="M1628.500 966l10 22h-27z" fill="#fff"/>
</svg>
<div  class="t" style="letter-spacing:4.571px;left:1649px;top:951.500px;font-size:22.500px;color:#163a5f;font-weight:bold">THEOREM</div>
<div  class="t" style="letter-spacing:5.658px;left:1661.500px;top:977px;font-size:11px;color:#666">SOLUTIONS</div>

<div class="abs" style="left:597px;top:345px;width:960px;height:667px;background:#fff;border:1px solid #4d6068"></div>
<div class="abs" style="left:601px;top:362px;width:949px;height:644px;background:#dcdcdc"></div>
<div class="abs" style="left:601px;top:362px;width:6px;height:644px;background:linear-gradient(90deg,#d3d8e2,#dcdcdc)"></div>
<svg style="left:601px;top:362px;overflow:hidden" width="949" height="643" viewBox="601 362 949 643" font-family="DejaVu Sans Mono, Liberation Mono, monospace">
<defs>
<linearGradient id="tireF" x1="0" y1="0" x2="1" y2="1"><stop offset="0" stop-color="#5d6072"/><stop offset=".45" stop-color="#4d4f61"/><stop offset="1" stop-color="#3d3f4e"/></linearGradient>
<radialGradient id="tireFace" cx=".38" cy=".32" r=".8"><stop offset="0" stop-color="#5a5d70"/><stop offset=".55" stop-color="#4c4e60"/><stop offset="1" stop-color="#383a48"/></radialGradient>
<linearGradient id="tealV" x1="0" y1="0" x2="0" y2="1"><stop offset="0" stop-color="#90c6c1"/><stop offset=".3" stop-color="#5d9a95"/><stop offset="1" stop-color="#305c5a"/></linearGradient>
<linearGradient id="tealH" x1="0" y1="0" x2="1" y2="0"><stop offset="0" stop-color="#4b7e7b"/><stop offset=".3" stop-color="#2f4949"/><stop offset=".7" stop-color="#5f9b96"/><stop offset="1" stop-color="#86bab6"/></linearGradient>
<linearGradient id="tealH2" x1="0" y1="0" x2="1" y2="0"><stop offset="0" stop-color="#336361"/><stop offset=".5" stop-color="#5d9c97"/><stop offset="1" stop-color="#3a6b69"/></linearGradient>
<linearGradient id="lav" x1="0" y1="0" x2="0" y2="1"><stop offset="0" stop-color="#d2d5ea"/><stop offset=".45" stop-color="#a3a7c6"/><stop offset="1" stop-color="#5d6080"/></linearGradient>
<linearGradient id="lavD" x1="0" y1="0" x2=".35" y2="1"><stop offset="0" stop-color="#c4c8e2"/><stop offset=".5" stop-color="#9599b8"/><stop offset="1" stop-color="#585b78"/></linearGradient>
<linearGradient id="cream" x1="0" y1="0" x2="1" y2="0"><stop offset="0" stop-color="#f0ecd6"/><stop offset="1" stop-color="#bdb898"/></linearGradient>
<radialGradient id="hub" cx=".45" cy=".4" r=".7"><stop offset="0" stop-color="#7d89a2"/><stop offset="1" stop-color="#5f6a84"/></radialGradient>
</defs>
<ellipse cx="1035" cy="812" rx="123.5" ry="142.3" transform="rotate(15.7 1035 812)" fill="#2e2f3a"/>
<ellipse cx="1035.0" cy="812.0" rx="123.5" ry="142.3" transform="rotate(15.7 1035.0 812)" fill="#5c5e70"/>
<ellipse cx="1036.8" cy="812.1" rx="121.6" ry="142.3" transform="rotate(15.7 1036.8 812)" fill="#30313c"/>
<ellipse cx="1038.5" cy="812.2" rx="119.7" ry="142.2" transform="rotate(15.7 1038.5 812)" fill="#5c5e70"/>
<ellipse cx="1040.3" cy="812.2" rx="117.7" ry="142.1" transform="rotate(15.7 1040.3 812)" fill="#30313c"/>
<ellipse cx="1042.1" cy="812.3" rx="115.8" ry="142.0" transform="rotate(15.7 1042.1 812)" fill="#5c5e70"/>
<ellipse cx="1043.8" cy="812.4" rx="113.9" ry="141.9" transform="rotate(15.7 1043.8 812)" fill="#30313c"/>
<ellipse cx="1045.6" cy="812.5" rx="112.0" ry="141.7" transform="rotate(15.7 1045.6 812)" fill="#5c5e70"/>
<ellipse cx="1047.4" cy="812.5" rx="110.0" ry="141.4" transform="rotate(15.7 1047.4 812)" fill="#30313c"/>
<ellipse cx="1049.2" cy="812.6" rx="108.1" ry="141.2" transform="rotate(15.7 1049.2 812)" fill="#5c5e70"/>
<ellipse cx="1050.9" cy="812.7" rx="106.2" ry="140.9" transform="rotate(15.7 1050.9 812)" fill="#30313c"/>
<ellipse cx="1052.7" cy="812.8" rx="104.3" ry="140.5" transform="rotate(15.7 1052.7 812)" fill="#5c5e70"/>
<ellipse cx="1054.5" cy="812.8" rx="102.3" ry="140.2" transform="rotate(15.7 1054.5 812)" fill="#42434f"/>
<ellipse cx="1056.2" cy="812.9" rx="100.4" ry="139.7" transform="rotate(15.7 1056.2 812)" fill="#3c3d49"/>
<ellipse cx="1058.0" cy="813.0" rx="98.5" ry="139.3" transform="rotate(15.7 1058.0 812)" fill="#41434f"/>
<ellipse cx="1061" cy="813" rx="96" ry="138.5" transform="rotate(16.7 1061 812)" fill="url(#tireFace)"/>
<ellipse cx="1078" cy="800" rx="52" ry="80" transform="rotate(16 1078 800)" fill="#3a3c4a" opacity=".55"/>
<path d="M1060 790l30 12v40l-30-12z" fill="#4a4c66"/>
<path d="M1068 778l34 16-8 70-30-20z" fill="#565878"/>
<path d="M1077 662h32v92l-14 12-18-12z" fill="#2c5f5b"/>
<path d="M1087 662h14v98l-6 6-8-6z" fill="#5b9d97"/>
<path d="M1092 662h5v100l-2 3-3-3z" fill="#6fb0a9"/>
<path d="M1099 662h10v92l-10 8z" fill="#8c9cba"/>
<path d="M1105 662h4v92l-4 3z" fill="#7d86a8"/>
<ellipse cx="1147" cy="860" rx="123.5" ry="142.3" transform="rotate(15.7 1147 860)" fill="#2e2f3a"/>
<ellipse cx="1147.0" cy="860.0" rx="123.5" ry="142.3" transform="rotate(15.7 1147.0 860)" fill="#5c5e70"/>
<ellipse cx="1148.8" cy="860.1" rx="121.6" ry="142.3" transform="rotate(15.7 1148.8 860)" fill="#30313c"/>
<ellipse cx="1150.5" cy="860.2" rx="119.7" ry="142.2" transform="rotate(15.7 1150.5 860)" fill="#5c5e70"/>
<ellipse cx="1152.3" cy="860.2" rx="117.7" ry="142.1" transform="rotate(15.7 1152.3 860)" fill="#30313c"/>
<ellipse cx="1154.1" cy="860.3" rx="115.8" ry="142.0" transform="rotate(15.7 1154.1 860)" fill="#5c5e70"/>
<ellipse cx="1155.8" cy="860.4" rx="113.9" ry="141.9" transform="rotate(15.7 1155.8 860)" fill="#30313c"/>
<ellipse cx="1157.6" cy="860.5" rx="112.0" ry="141.7" transform="rotate(15.7 1157.6 860)" fill="#5c5e70"/>
<ellipse cx="1159.4" cy="860.5" rx="110.0" ry="141.4" transform="rotate(15.7 1159.4 860)" fill="#30313c"/>
<ellipse cx="1161.2" cy="860.6" rx="108.1" ry="141.2" transform="rotate(15.7 1161.2 860)" fill="#5c5e70"/>
<ellipse cx="1162.9" cy="860.7" rx="106.2" ry="140.9" transform="rotate(15.7 1162.9 860)" fill="#30313c"/>
<ellipse cx="1164.7" cy="860.8" rx="104.3" ry="140.5" transform="rotate(15.7 1164.7 860)" fill="#5c5e70"/>
<ellipse cx="1166.5" cy="860.8" rx="102.3" ry="140.2" transform="rotate(15.7 1166.5 860)" fill="#42434f"/>
<ellipse cx="1168.2" cy="860.9" rx="100.4" ry="139.7" transform="rotate(15.7 1168.2 860)" fill="#3c3d49"/>
<ellipse cx="1170.0" cy="861.0" rx="98.5" ry="139.3" transform="rotate(15.7 1170.0 860)" fill="#41434f"/>
<ellipse cx="1173" cy="861" rx="96" ry="138.5" transform="rotate(16.7 1173 860)" fill="url(#tireFace)"/>
<ellipse cx="1175.500" cy="873.500" rx="36" ry="50" transform="rotate(25 1175.500 873.500)" fill="#6f7b94"/>
<ellipse cx="1177" cy="872" rx="26.500" ry="38" transform="rotate(25 1177 872)" fill="#5b6680"/>
<ellipse cx="1174.500" cy="872.500" rx="25" ry="36.500" transform="rotate(25 1174.500 872.500)" fill="#6a7690"/>
<path d="M1189 838c14 10 14 48-6 66 14-22 16-50 6-66z" fill="#8e9ab4" opacity=".8"/>
<circle cx="1170.800" cy="871" r="4.300" fill="#8a8a78"/><circle cx="1170" cy="870.200" r="2.300" fill="#e8e8d4"/>
<!-- ============ torque link (cream) ============ -->
<g>
<path d="M1026 812l11-4v30l-11 4z" fill="#8d90b4"/>
<path d="M1053 667l30 9 2 15-30-9z" fill="url(#lav)"/>
<path d="M1060 670l8 2v14l-8-2z" fill="#55587a"/>
<!-- left arm -->
<path d="M1045 665l11 2.500 1 8-4 22-11 34-1 12-14 3 -3-9 8-30z" fill="#ebe7d2"/>
<!-- right arm -->
<path d="M1082 677l9 5 -1 9-23 40-18 26-9-3 2-15 25-37z" fill="#dcd8c0"/>
<!-- cross bar near top -->
<path d="M1053 690l16 5 6-10 -18-6z" fill="#e4e0ca"/>
<!-- hole -->
<path d="M1053.200 697.500l13.900 4.600-24.800 29.500z" fill="#55555c"/>
<path d="M1055 701l9 3-17 20z" fill="#3a3a42"/>
<!-- bottom joint -->
<path d="M1027 738l16 6 5 10-5 14-14 2-17-9-3-11 8-9z" fill="#d6d2ba"/>
<path d="M1012 744l10-5 6 20-8 4-9-5z" fill="#bcb8a0"/>
<circle cx="1017" cy="751" r="4.500" fill="#77776c"/><circle cx="1032" cy="758" r="5" fill="#88887a"/>
<path d="M1036 745l9 22" stroke="#55555c" stroke-width="3"/>
<!-- bolt -->
<circle cx="1088" cy="686.500" r="5" fill="#b0a83c"/><circle cx="1088" cy="686.500" r="2.300" fill="#5a5418"/>
</g>

<!-- ============ mid section ============ -->
<g>
<!-- back plate (light teal) -->
<path d="M1096 555l33-4 6 43 21 22-10 6-25-14v-20l-29-12z" fill="#75ada8"/>
<!-- diagonal brace lower part -->
<path d="M1127 530h18.500l-37 42-11-7z" fill="#5d9c98"/><path d="M1127 530h4l-30 36-3.500-1z" fill="#99ccc7"/>
<!-- elbow tube at top -->
<path d="M1062 530h38v22c-6 12-32 12-38 0z" fill="url(#tealH)"/>
<path d="M1066 541c4 12 28 13 33 2l1 10c-6 12-32 12-38 0z" fill="#99cec9"/>
<path d="M1070 530h22v10c-5 6-17 6-22 0z" fill="#234746"/>
<path d="M1062 548l38 2 8 30-46-12z" fill="#518f8b"/>
<!-- right lug -->
<path d="M1135.700 568.800l15.600-7.700 27.100 12.600 3 16.500-11.700 17.500-13.700 8.700-9.600-10.700-11.600-11.700z" fill="#90c2bd"/>
<path d="M1135.700 568.800l15.600-7.700 27.100 12.600-14 8z" fill="#aed8d3"/>
<ellipse cx="1152.500" cy="574" rx="5" ry="6.500" transform="rotate(-35 1152.500 574)" fill="#eaf2f1"/><ellipse cx="1153" cy="574.500" rx="3" ry="4.500" transform="rotate(-35 1153 574.500)" fill="#5e908e"/>
<ellipse cx="1167.500" cy="586.500" rx="5" ry="6.500" transform="rotate(-35 1167.500 586.500)" fill="#f5f9f8"/><ellipse cx="1168" cy="587" rx="3" ry="4" transform="rotate(-35 1168 587)" fill="#a0c2be"/>
<!-- collar block -->
<path d="M1035.700 567l11.700-8 44.600 17.600-5.800 9.700z" fill="#73aaa5"/>
<path d="M1035.700 567l50.500 19.300v12l-50.500-15z" fill="#407d7a"/>
<path d="M1086.200 586.300l5.800-9.700 29.200 11.700v58.200l-35-1.900z" fill="#55938f"/>
<path d="M1063 625h58.200v39l-27 4-29-6z" fill="url(#tealH)"/>
<path d="M1063 655c10 8 48 10 58 0v9c-10 8-46 8-56-2z" fill="#3a6d6b"/>
<!-- beige box -->
<path d="M1034.800 583.400l45.600 14.600-1 44.600-43.700-19.400z" fill="#6b675b"/>
<path d="M1037.700 588.300l38.800 12.600-7.800 10.700-29.100-11.700z" fill="#b9b2a2"/>
<path d="M1039.600 599.900l29.100 11.700v23.300l-29.100-13.600z" fill="#59554b"/>
<path d="M1076.500 600.900l2.500 1v38l-10.300-5v-23.300z" fill="#8f8a7c"/>
<path d="M1080.400 598l3 1.500-1 45-3-1.900z" fill="#dedad0"/>
<!-- left actuator -->
<path d="M998.800 562l38.900 13.600-2.900 28.200-40.800-18.500z" fill="url(#lavD)"/>
<ellipse cx="996.500" cy="573.500" rx="6.500" ry="12.500" transform="rotate(-12 996.500 573.500)" fill="#b9bcd8"/><ellipse cx="995.500" cy="573.500" rx="4" ry="9.500" transform="rotate(-12 995.500 573.500)" fill="#8c8fae"/>
<path d="M1003 549l34.700 13" stroke="#96a33a" stroke-width="2" fill="none"/><path d="M1002 545l8 3-2 9-7-2z" fill="#aab83a"/><circle cx="1002" cy="557" r="3.500" fill="#8c8fae"/>
<!-- right actuator -->
<path d="M1088 607.700l8 2v29l-8-3z" fill="#b4b7d6"/>
<path d="M1096 609.600l48.500 15.500-5.900 20.400-44.600-21.300z" fill="url(#lavD)"/>
<path d="M1142.500 623.200l8.800 1 6.700 14.500-8.700 15.600-13.600-7.800z" fill="#b6b9da"/>
<path d="M1158 632l14.600 3.800v5.900l-14.600 1.900z" fill="#c9c5ad"/><path d="M1166 634l6.600 1.800v5.900l-6.600 1z" fill="#e4e0cc"/>
<!-- lavender bracket -->
<path d="M1121.600 645.800l11.600 3.900 9.800 4.900-20.500 9.700z" fill="#cfcfe2"/>
<path d="M1109 664.300l34.900-10.700 7.800 3.900-1 5.800-40.800 23.300z" fill="#a9a7cd"/>
<path d="M1109 676l41-14.500.7 1.800-40.800 23.300z" fill="#8d8bb4"/>
<circle cx="1146.400" cy="659.500" r="2.200" fill="#5f5d86"/><circle cx="1129" cy="652.500" r="1.800" fill="#55557a"/>
<!-- yellow pipe -->
<path d="M1055 530v29M1096 530l2 60 44.500 19.600 1 12" stroke="#96a33a" stroke-width="1.700" fill="none" stroke-linejoin="round"/>
<path d="M1131 604l12 5.500" stroke="#b2bf4a" stroke-width="2.400" fill="none"/>
</g>
<!-- ============ upper section ============ -->
<g>
<!-- lower column below plate -->
<path d="M1080 494l34 10 1.500 56h-35z" fill="url(#tealH2)"/>
<path d="M1096 503h10v51h-10z" fill="#284d4c"/>
<path d="M1106 503l8 2 1.500 55h-9.500z" fill="#7bafab"/>
<!-- diagonal brace upper part -->
<path d="M1146 507l12 9-40 44h-15z" fill="#5d9c98"/><path d="M1146 507l3.500 2.500-42.500 50.500h-4z" fill="#90c5c0"/>
<!-- elbow top part -->
<path d="M1063 542.500c8-6 28-6 37 0v17.500h-37z" fill="url(#tealH)"/>
<!-- gray-blue valve block -->
<path d="M1031.800 480.400l21.400-7.800 25.200 9.700-17.400 9.700z" fill="#565a70"/>
<path d="M1031.800 480.400l29.200 11.600 5.800 50.500-30.100-15.500z" fill="#3b3d50"/>
<path d="M1061 492l17.400-9.700 5.900 48.600-17.500 11.600z" fill="#8b8fba"/>
<path d="M1033.800 503.700l30.100 11.600 17.500-9.700" stroke="#25273a" stroke-width="1.300" fill="none"/>
<path d="M1066 518l16-9 2 20-15 10z" fill="#9fa3cc"/>
<!-- fittings on block -->
<path d="M1051.500 461h7.500v22h-7.500z" fill="#4a4c5c"/><path d="M1063 469h6v19h-6z" fill="#55576a"/><path d="M1042 470h6v12h-6z" fill="#5a5c6e"/>
<path d="M1052 458h6.500v5h-6.500zM1063 466h6v4h-6z" fill="#a9b43c"/>
<!-- gusset web under left arm -->
<path d="M1016 440l14 8 9 30-8 3z" fill="#2f6460"/>
<!-- trunnion under left arm -->
<path d="M1026 447c4-6 14-6 18 2l4 28-10 4c-8-6-14-20-12-34z" fill="#407b79"/>
<path d="M1031 450c4-3 8-2 10 3l3 24-4 2c-6-8-10-18-9-29z" fill="#7cb0ac"/>
<path d="M1036 452c2-1 4 0 5 3l2 20-2 1c-4-8-6-16-5-24z" fill="#2d5b59"/>
<!-- left block + arm -->
<path d="M1017.300 408.500l55.300 22.400-.9 34.900-55.400-20.400z" fill="url(#tealV)"/>
<path d="M1017.300 408.500l55.300 22.400-.3 6-55-21z" fill="#98ccc7"/>
<path d="M985.200 408.500l10.700-11.600 22.400 8.700-2 12.700z" fill="#7aada8"/>
<path d="M985.200 408.500l31.100 9.800v33l-27.200-13.600z" fill="#3b7370"/>
<path d="M1016.300 418.300l2-12.700 4 2-1 46-5-2.300z" fill="#8ac0bc"/>
<ellipse cx="987.500" cy="412" rx="2.500" ry="5" fill="#e1ecec"/>
<!-- dark plate under hub -->
<path d="M1076.500 476.500l36.900-13.600 40.800 17.500-7.800 19.400-31.100 5.800-36.900-11.600z" fill="#234645"/>
<path d="M1076.500 476.500l36.900-13.600 40.800 17.500-38.900 13.600z" fill="#356462"/>
<!-- central hub cylinder -->
<path d="M1071.700 428h42.700v40c-8 7-34 7-42.700 0z" fill="url(#tealH)"/>
<ellipse cx="1093" cy="428" rx="21.300" ry="8" fill="#77afaa"/>
<!-- upper right arm -->
<path d="M1104.700 418.300l18.400-40.800 7.800-5.800 25.200 11.600 4.900 9.700-4.900 6.800-11.600 6.800-17.500 27.200-12.600 19.400-1.500-11z" fill="#97c9c4"/>
<path d="M1115.300 418.300l19.500-33.100 7.700 5.800-19.400 35z" fill="#5c9793"/>
<path d="M1140.600 400.800l3.900 5.800-17.500 27.200-12.600 19.400-1-11.600z" fill="#7ab8b1"/>
<ellipse cx="1138.600" cy="383.500" rx="4.500" ry="6" transform="rotate(-30 1138.600 383.500)" fill="#cdeae6"/><ellipse cx="1139" cy="384" rx="2.800" ry="4.200" transform="rotate(-30 1139 384)" fill="#4d827e"/>
<ellipse cx="1154" cy="391" rx="4.500" ry="6" transform="rotate(-30 1154 391)" fill="#cdeae6"/><ellipse cx="1154.400" cy="391.500" rx="2.800" ry="4.200" transform="rotate(-30 1154.400 391.500)" fill="#4d827e"/>
<!-- valve on top -->
<path d="M1068.700 410.500l27.200-11.700 8.800 19.500-28.200 9.700z" fill="#9c9c94"/>
<path d="M1068.700 410.500l7.800 17.500v6l-7.800-16z" fill="#55554f"/>
<path d="M1076.500 428l28.200-9.700v5l-28.200 10.700z" fill="#77776f"/>
<path d="M1087.200 386h7v22h-7z" fill="#a9a27a"/><path d="M1085 398h12v10h-12z" fill="#8b8b80"/><path d="M1089.500 381h3v6h-3z" fill="#7c7c5c"/>
<path d="M1065.500 410h3.500v16h-3.500zM1071 404h3v12h-3z" fill="#3e3e44"/>
<path d="M1080 408h5v8h-5z" fill="#c8c8b8"/>
<!-- studs + fittings on plate -->
<path d="M1133.800 459h4v12h-4z" fill="#8a8a94"/><path d="M1149.300 466h3.200v11h-3.200z" fill="#8a8a94"/>
<path d="M1108 474c8-3 18 2 24 4s10 3 14 8" stroke="#96a33a" stroke-width="1.700" fill="none"/>
<path d="M1114 478l8 3M1124 476l6 6M1132 482l10 2M1118 484l10 2" stroke="#b2bf4a" stroke-width="1.800" fill="none"/>
<!-- pipe from block to hub -->
<path d="M1045.400 470v-12c0-5 5-6 9-4l22 12 31 16" stroke="#96a33a" stroke-width="1.700" fill="none" stroke-linejoin="round"/>
<!-- right flange -->
<path d="M1143.500 480.500l24.300-9.300 26.200 16.400-15 8.400z" fill="#b0d9d5"/>
<path d="M1143.500 480.500l35.500 15.500-4.200 28.300-17.500-10.500-10.500-14z" fill="#78b4ae"/>
<path d="M1179 496l15-8.400 1.700 26.200-20.900 10.500z" fill="#92c8c2"/>
<path d="M1176.500 492.500l16-1.500 6.700 9-3 7.500-18 1z" fill="#cdb8ae"/><path d="M1189 491.300l3.500-.3 6.700 9-3 7.500-3.500.2z" fill="#e8dcd4"/><path d="M1177.500 503l17.500 0 1.200 4.500-18 1z" fill="#8f7d78"/>
<ellipse cx="1195.500" cy="499.800" rx="3" ry="4.500" fill="#f0e8e2"/>
<!-- lower pipe fitting near block bottom -->
<path d="M1072 522l10 6 6 10v22" stroke="#96a33a" stroke-width="1.700" fill="none"/><path d="M1072 520l8 5" stroke="#b2bf4a" stroke-width="2.600" fill="none"/>
</g>
<!-- ============ annotations ============ -->
<g fill="none" stroke="#111" stroke-width="1">
<path d="M1224.500 362v195.500M1221 557v180"/>
<path d="M1219 362l-176 56"/>
<path d="M1151.500 406l40.800 22.200M1158 401l31 22"/>
<path d="M1188.500 423l21.500-1 .5 20.500-21.500 1z"/>
<path d="M1210 433.300l92.800 44.200-107 32.300"/>
<ellipse cx="1226.300" cy="441.800" rx="4.500" ry="1.800"/>
<path d="M1180.400 509.800l47.600 27.200"/>
<path d="M1228 529l21.500-.5.500 20-21.500.5z"/>
<path d="M1171.900 572.600l49.300-17M1173 575.500l48.200-16.600" />
<path d="M1158.300 603.200l59.500 35.700"/>
<path d="M1175.300 638.900l45.900-13.600" stroke-width="1.800"/>
<path d="M1217 629.500l21.500-.5.500 21-21.500.5z"/>
<path d="M1153.200 645.700l73.100 44.200"/>
<path d="M1226.500 679.500l21-.5.500 20.500-21 .5z"/>
<!-- D / E -->
<path d="M978.500 493l20.500-1 .5 20-20.500 1z"/>
<path d="M999.300 503l35 17"/>
<path d="M968 517l5 0-2 9.500zM971.400 525l63 49.300"/>
<path d="M976 509l6-16"/>
<path d="M939.500 538.500l22-.8.500 20-22 .8z"/>
<path d="M961.900 548.800l30 17"/>
<!-- section text leader + dims -->
<path d="M995.100 675.100l34.100 97"/>
<path d="M874.800 736.200l50.300-14.400v36zM874.800 736.200l50.300 21.600 55.600-10.800v92"/>
<path d="M980.700 840v8" stroke-dasharray="1.500 2"/>
<path d="M986.100 784.700l43.100-10.800 5.400 37.700zM986.100 784.700l48.500 26.900 55.700-12.500v92"/>
<path d="M1090.300 891v10" stroke-dasharray="1.500 2"/>
<path d="M1080 708l-21 34M1080 708l4 4-21 34-4-4"/>
<!-- GD&T frame -->
<path d="M1290.200 807l152.300 6.400-.7 20.500-151.600-7.200zM1323.300 808.400l-.5 19.800"/>
<circle cx="1306.400" cy="817.700" r="7.800"/>
<circle cx="1395.100" cy="821.800" r="7.600"/>
<path d="M1409.500 822.500l5-7.500 15 .7 5 7.300-5 7.200-15-.7z"/>
<path d="M1290.200 817l-114.200 54.600"/>
<path d="M1334.500 827.500l9-17"/><ellipse cx="1339.500" cy="819" rx="5.200" ry="6.200"/>
</g>
<g font-style="italic" font-family="DejaVu Sans Light, DejaVu Sans, sans-serif" fill="#000" stroke="#000" stroke-width=".350">
<text transform="translate(1192.500 440.500) rotate(-3)" font-size="17">A</text>
<path d="M1190 429h19M1192 436l16-6" stroke="#111" stroke-width="1" fill="none"/>
<text transform="translate(1233 546) rotate(-2)" font-size="16">B</text>
<text transform="translate(1222 647.500) rotate(-2)" font-size="16">C</text>
<text transform="translate(1231.500 696) rotate(-2)" font-size="15">F</text>
<text transform="translate(983 510) rotate(-3)" font-size="16">D</text>
<text transform="translate(945 555.500) rotate(-3)" font-size="16">E</text>
<text transform="translate(1204 469.500) rotate(-16)" font-size="14.500" textLength="44" lengthAdjust="spacing">477.6</text>
<text transform="translate(1203 598.500) rotate(-16)" font-size="14.500" textLength="43" lengthAdjust="spacing">167.6</text>
<text transform="translate(1201 718) rotate(-16)" font-size="15" textLength="46" lengthAdjust="spacing">395.9</text>
<text transform="translate(747.500 759) rotate(-18.300)" font-size="14.500" textLength="263" lengthAdjust="spacing">Section Through Model Centre</text>
<text transform="translate(884 744) rotate(25)" font-size="11" textLength="38" lengthAdjust="spacing">200.0</text>
<text transform="translate(991 789) rotate(25)" font-size="11" textLength="40" lengthAdjust="spacing">200.0</text>
<text transform="translate(945 752) rotate(25)" font-size="9" textLength="26" lengthAdjust="spacing">214.9</text>
<text transform="translate(1350.500 824.500) rotate(2.500)" font-size="15" font-style="normal" textLength="36" lengthAdjust="spacing">4.0</text>
<text transform="translate(1390 826) rotate(2.500)" font-size="12" font-style="normal">M</text>
<text transform="translate(1413.500 827) rotate(2.500)" font-size="11.500" font-style="normal" textLength="17" lengthAdjust="spacing">ST</text>
<text x="961" y="501" font-size="9" font-weight="bold" font-style="normal" font-family="Liberation Sans, sans-serif">H8</text>
<text x="961" y="515" font-size="9" font-weight="bold" font-style="normal" font-family="Liberation Sans, sans-serif">H8</text>
<text x="983" y="524" font-size="9" font-weight="bold" font-style="normal" font-family="Liberation Sans, sans-serif">H</text>
</g>
<!-- axis triad -->
<g fill="none" stroke-width="1.200">
<path d="M644.900 960.700v-36" stroke="#2a2ad0"/><path d="M644.900 960.700l27 12.600" stroke="#d02a2a"/><path d="M644.900 960.700l32-10.700" stroke="#2ab02a"/>
<path d="M643.400 930l1.500-5 1.500 5z" fill="#2a2ad0" stroke="#2a2ad0"/>
</g>
<text x="643" y="924" font-size="5" fill="#2a2ad0" font-family="Liberation Sans, sans-serif">z</text>
</svg>


<!-- ================= RIGHT SIDE ================= -->
<div id="vscroll" class="abs"></div>
<div id="gutterR" class="abs"></div>
<div id="rightstrip" class="abs"></div>
<!-- doc vertical scrollbar -->
<div class="abs" style="left:1820px;top:157px;width:20px;height:9px;background:#dadada;border:1px solid #c4c4c4"></div>
<div class="abs" style="left:1820px;top:189px;width:20px;height:273px;background:#c9c9c9"></div>
<svg style="left:1820px;top:156px" width="20" height="874" viewBox="1820 156 20 874"><path d="M1824.500 181.500l5.500-5.500 5.500 5.500M1824.500 1015l5.500 5.500 5.500-5.500" fill="none" stroke="#444" stroke-width="1.900"/></svg>
<!-- gutter arrows -->
<svg style="left:556px;top:580px" width="24" height="26" viewBox="556 580 24 26"><path d="M570.500 586.500v13l-7.500-6.500z" fill="#5a5a5a"/></svg>
<svg style="left:1840px;top:580px" width="22" height="26" viewBox="1840 580 22 26"><path d="M1854.500 585.500v13.500l-7.500-6.800z" fill="#5a5a5a"/></svg>
<!-- right tool strip icons -->
<svg style="left:1862px;top:156px" width="58" height="874" viewBox="1862 156 58 874">
<g fill="none" stroke="#555" stroke-width="2.300" stroke-linecap="round"><circle cx="1890" cy="183.200" r="9.800"/><path d="M1897.500 190.500l6 6" stroke-width="2.800"/></g>
<path d="M1888.500 178.500v9.500l-5-4.700zM1891.500 178.500v9.500l5-4.700z" fill="#555"/>
<path d="M1872 214.500h39.500" stroke="#d6d6d6" stroke-width="1"/>
<!-- create pdf (red) -->
<g fill="none" stroke="#d7373f" stroke-width="2.200" stroke-linejoin="round"><path d="M1892 256h-11.500v-25.500h12l7 7v7"/><path d="M1884 249c3-3 5-7 5.500-11 .5 3 2 6 5 7.500" stroke-width="1.400"/></g>
<circle cx="1897.500" cy="249.500" r="7.800" fill="#d7373f"/><path d="M1897.500 245v9M1893 249.500h9" stroke="#fff" stroke-width="2.200"/>
<!-- export/combine (blue-violet) -->
<g fill="none" stroke="#5b5be2" stroke-width="2.200" stroke-linejoin="round"><path d="M1886 304h-8.500v-18.500h12"/><path d="M1880 300c2.500-2.500 4-6 4.500-9 .5 2.500 1.500 4.500 4 6" stroke-width="1.300"/></g>
<path d="M1891.500 284.500h9l5.500 5.500v17h-14.500z" fill="#5b5be2"/><path d="M1900.500 284.500v5.500h5.500" stroke="#fafafa" stroke-width="1" fill="none"/>
<path d="M1890 300v8M1885 306.500l5 6 5-6z" fill="#5b5be2" stroke="#5b5be2" stroke-width="2.200" stroke-linejoin="round"/>
<!-- form (pink) -->
<g fill="#f3c6dc" stroke="#c9367f" stroke-width="2.200" stroke-linejoin="round"><rect x="1877.800" y="344.500" width="26.500" height="10.500" rx="1"/><rect x="1877.800" y="358.500" width="14" height="10.500" rx="1"/></g>
<path d="M1896 360h8.500M1896 364h8.500M1896 368h8.500" stroke="#c9367f" stroke-width="1.500"/>
<!-- request signatures (magenta) -->
<circle cx="1885" cy="407" r="5.500" fill="#b93cbb"/><path d="M1876.500 423.500c0-7 3.500-10 8.500-10s6 2 7 4l-4 6.500z" fill="#b93cbb"/>
<path d="M1890.500 402c3 2.500 3.500 8 .5 11.500" stroke="#b93cbb" stroke-width="1.800" fill="none"/>
<path d="M1897 410l6.500 5.500-4 8-8.500 2.500 1.500-9z" fill="#fafafa" stroke="#b93cbb" stroke-width="1.800" stroke-linejoin="round"/><circle cx="1897" cy="419.500" r="1.300" fill="#b93cbb"/><path d="M1901 411l4.500-2" stroke="#b93cbb" stroke-width="1.800"/>
<!-- fill & sign (purple pen) -->
<g fill="none" stroke="#8a55c9" stroke-width="2.400" stroke-linejoin="round" stroke-linecap="round"><path d="M1878.500 482.500l2-8 15.500-15.500c1.500-1.500 3.500-1.500 5 0s1.500 3.500 0 5l-15.500 15.500z"/><path d="M1889 482c2-4 4.500-4.500 4.500-1.500s3 2 4-.5c.5 2.500 2.500 3 5 1" stroke-width="2"/></g>
<!-- export pdf (teal) -->
<g fill="none" stroke="#2b8f86" stroke-width="2.200" stroke-linejoin="round"><path d="M1890 541h-11v-26.500h12l7 7v6"/><path d="M1882.500 534c3-3 5-7 5.500-11 .5 3 2 6 5 7.500" stroke-width="1.400"/></g>
<circle cx="1897.500" cy="535" r="7.800" fill="#2b8f86"/><path d="M1893 535h8M1898 531.500l3.500 3.500-3.500 3.500" stroke="#fff" stroke-width="2" fill="none"/>
<!-- organize pages (green) -->
<g fill="#dff2c8" stroke="#7cc242" stroke-width="2.200" stroke-linejoin="round"><rect x="1893" y="573" width="11" height="24" rx="1"/></g>
<g fill="none" stroke="#7cc242" stroke-width="2.200"><path d="M1879 583v14h10v-14" stroke-dasharray="3 2.500"/><path d="M1879.500 578.500l4.500-4.500M1880 573.500h5v5" stroke-width="2"/></g>
<!-- comment doc (yellow) -->
<g fill="none" stroke="#dab821" stroke-width="2.200" stroke-linejoin="round"><path d="M1890 651.500h-11.500v-24.500h11l7 7v5"/><path d="M1889 627v7.500h7.500" stroke-width="1.500"/></g>
<path d="M1890.500 641.500h14.500v10h-8l-3 3.500v-3.500h-3.500z" fill="#dab821"/><path d="M1893.500 645h8.500M1893.500 648h6" stroke="#fafafa" stroke-width="1.200"/>
<!-- comment (yellow filled) -->
<path d="M1880 686h22.500c1.500 0 2.500 1 2.500 2.500v14c0 1.500-1 2.500-2.500 2.500h-9l-5 6v-6h-8.500c-1.500 0-2.500-1-2.500-2.500v-14c0-1.500 1-2.500 2.500-2.500z" fill="#e0b921"/>
<path d="M1883 692.500h16.500M1883 698h16.500" stroke="#fafafa" stroke-width="2.200"/>
<!-- print production (green) -->
<g fill="none" stroke="#39a152" stroke-width="2.300" stroke-linejoin="round"><path d="M1884 752v-9h9l5 5v4"/><rect x="1878" y="752" width="26" height="10.500" rx="1.500" fill="#39a152"/><rect x="1883.500" y="759" width="15" height="10.500" fill="#fafafa" stroke-dasharray="4 2"/></g>
<path d="M1880 743l1.500 2.500M1902.500 741v4M1900.500 743h4" stroke="#39a152" stroke-width="1.600"/>
<!-- protect (shield) -->
<path d="M1891 801c4 2.500 8 3.500 11.500 3.500v10c0 6.500-5 11-11.500 13.500-6.500-2.500-11.500-7-11.500-13.500v-10c3.500 0 7.500-1 11.500-3.500z" fill="#dcdcfa" stroke="#5b5bd9" stroke-width="2.300" stroke-linejoin="round"/>
<path d="M1891 803.500v22c5-2.500 9-6 9-11v-8c-3 0-6-1-9-3z" fill="#fafafa" opacity=".85"/>
<!-- more tools (wrench +) -->
<path d="M1879.500 880l12-12c-1.500-4 .5-8 4.500-9.500l2.500-.5-3.500 4.500 1 3.500 3.500 1 4-3.500c.5 4-1 7-4.500 8.500-1.500.5-3 .5-4.500 0l-12 12c-1 1-2.500 1-3.500 0s-.5-3 .5-4z" fill="#666"/>
<circle cx="1899" cy="879" r="7.500" fill="#fafafa"/><circle cx="1899" cy="879" r="6.300" fill="#666"/><path d="M1899 875.200v7.600M1895.200 879h7.600" stroke="#fafafa" stroke-width="2"/>
<path d="M1872 972.500h39.500" stroke="#d6d6d6" stroke-width="1"/>
<g fill="none" stroke="#555" stroke-width="2.300" stroke-linecap="round" stroke-linejoin="round"><path d="M1887 992.500v17.500M1891 1001h11M1897.500 996.500l4.500 4.500-4.500 4.500"/></g>
</svg>

<!-- bottomline --><div class="abs" style="left:581px;top:1029px;width:1235px;height:1px;background:#c2c2c2"></div>

</body>
</html>
